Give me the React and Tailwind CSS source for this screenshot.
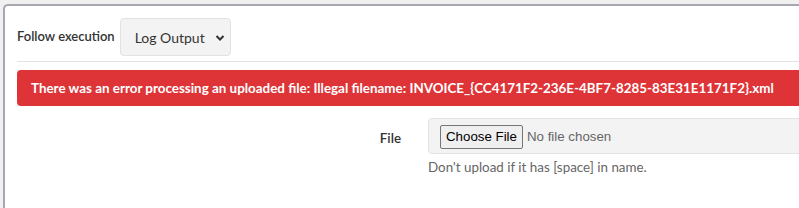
import React from "react";

export default function App() {
  return (
    <div className="w-[799px] h-[208px] overflow-hidden bg-[#f0f0f0] pt-[4px] pl-[3px]" style={{ fontFamily: "Lato, 'Noto Sans', sans-serif" }}>
      <div className="w-[900px] h-[260px] bg-white border-l-[2px] border-t-[2px] border-[#a7a7b0] rounded-tl-[5px] pl-[12px] pt-[12px]">
        <div className="flex items-center gap-[5px] h-[38px]">
          <span className="text-[13px] font-semibold text-[#333]">Follow execution</span>
          <div className="flex items-center justify-between w-[111px] h-[38px] bg-[#f3f3f3] border border-[#e2e2e2] rounded-[4px] pl-[14px] pr-[5px]">
            <span className="text-[14px] text-[#333]">Log Output</span>
            <svg width="10" height="8" viewBox="0 0 10 8" className="mt-[1px]">
              <path d="M1.5 2 L5 5.5 L8.5 2" fill="none" stroke="#333" strokeWidth="2" />
            </svg>
          </div>
        </div>
        <div className="mt-[5px] h-px bg-[#e3e3e3] w-[900px]" />
        <div className="mt-[8px] h-[36px] w-[860px] bg-[#df3437] rounded-[4px] flex items-center pl-[14px]">
          <span className="text-[13.4px] font-bold text-white whitespace-nowrap">
            There was an error processing an uploaded file: Illegal filename: INVOICE_{"{"}CC4171F2-236E-4BF7-8285-83E31E1171F2{"}"}.xml
          </span>
        </div>
        <div className="flex mt-[12px]">
          <div className="w-[411px] flex justify-end pr-[27px] pt-[10px]">
            <span className="text-[13.4px] font-semibold text-[#333]">File</span>
          </div>
          <div className="flex flex-col">
            <div className="w-[420px] h-[36px] bg-[#f3f3f3] border border-[#e2e2e2] rounded-[4px] pl-[11px] pt-[4px]">
              <input
                type="file"
                className="text-[13.3px] text-[#666] file:mr-[4px] file:border file:border-solid file:border-[#767676] file:bg-[#efefef] file:text-black file:px-[5px] file:py-[1px] file:rounded-[2px] file:text-[13.3px]"
                style={{ fontFamily: "'Liberation Sans', Arial, sans-serif" }}
              />
            </div>
            <span className="mt-[3px] text-[13.4px] text-[#666]">Don't upload if it has [space] in name.</span>
          </div>
        </div>
      </div>
    </div>
  );
}
